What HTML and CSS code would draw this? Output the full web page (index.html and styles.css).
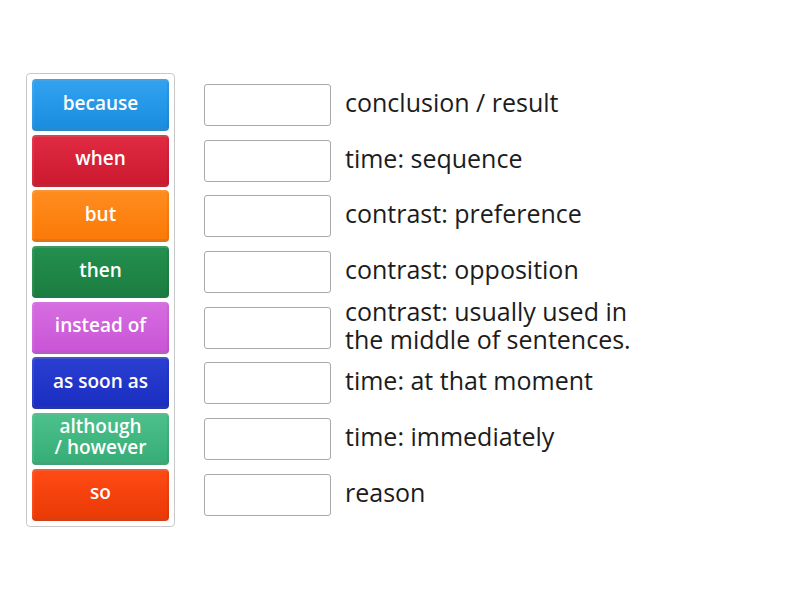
FILE: index.html
```html
<!DOCTYPE html>
<html lang="en">
<head>
<meta charset="utf-8">
<title>Match up</title>
<link rel="stylesheet" href="styles.css">
</head>
<body>
<div class="board">
  <div class="bank">
    <div class="tile blue">because</div>
    <div class="tile red">when</div>
    <div class="tile orange">but</div>
    <div class="tile green">then</div>
    <div class="tile pink">instead of</div>
    <div class="tile navy">as soon as</div>
    <div class="tile mint">although<br>/ however</div>
    <div class="tile vermilion">so</div>
  </div>
  <div class="targets">
    <div class="row"><div class="slot"></div><div class="label">conclusion / result</div></div>
    <div class="row"><div class="slot"></div><div class="label">time: sequence</div></div>
    <div class="row"><div class="slot"></div><div class="label">contrast: preference</div></div>
    <div class="row"><div class="slot"></div><div class="label">contrast: opposition</div></div>
    <div class="row"><div class="slot"></div><div class="label">contrast: usually used in<br>the middle of sentences.</div></div>
    <div class="row"><div class="slot"></div><div class="label">time: at that moment</div></div>
    <div class="row"><div class="slot"></div><div class="label">time: immediately</div></div>
    <div class="row"><div class="slot"></div><div class="label">reason</div></div>
  </div>
</div>
</body>
</html>
```

FILE: styles.css
```css
html, body {
  margin: 0;
  padding: 0;
  background: #fff;
}

body {
  font-family: "Open Sans", "Noto Sans", sans-serif;
  color: #1a1a1a;
}

.board {
  display: flex;
  align-items: flex-start;
  padding: 73px 0 0 26px;
}

/* word bank on the left */
.bank {
  width: 137px;
  padding: 5px;
  border: 1px solid #c8c8c8;
  border-radius: 4px;
  display: flex;
  flex-direction: column;
  gap: 3.7px;
}

.tile {
  height: 52px;
  box-sizing: border-box;
  padding-bottom: 3px;
  border-radius: 4px;
  display: flex;
  align-items: center;
  justify-content: center;
  text-align: center;
  color: #fff;
  font-weight: 600;
  font-size: 19px;
  line-height: 21px;
  border-top: 2px solid rgba(255, 255, 255, 0.18);
  border-bottom: 3px solid rgba(0, 0, 0, 0.14);
  box-shadow: inset 2px 0 0 rgba(255, 255, 255, 0.08), inset -2px 0 0 rgba(0, 0, 0, 0.06);
}

.blue      { background: linear-gradient(#30a2f0, #1b8ddf); }
.red       { background: linear-gradient(#e02a42, #cc1a30); }
.orange    { background: linear-gradient(#ff8c1e, #fb7a08); }
.green     { background: linear-gradient(#238f4e, #1b7e41); }
.pink      { background: linear-gradient(#d66de0, #c955d6); }
.navy      { background: linear-gradient(#2a3ed2, #1b2ec2); }
.mint      { background: linear-gradient(#4cc08a, #37ad78); }
.vermilion { background: linear-gradient(#ff4a14, #ea3a06); }

/* answer slots and their descriptions */
.targets {
  margin-left: 29px;
  padding-top: 11px;
  display: flex;
  flex-direction: column;
  gap: 13.7px;
}

.row {
  display: flex;
  align-items: center;
  height: 42px;
}

.slot {
  width: 127px;
  height: 42px;
  box-sizing: border-box;
  border: 1px solid #a9a9a9;
  border-radius: 3px;
  background: #fff;
  flex: none;
}

.label {
  margin-left: 14px;
  margin-top: -6px;
  font-size: 25px;
  line-height: 28px;
  color: #1c1c1c;
  white-space: nowrap;
}
```
